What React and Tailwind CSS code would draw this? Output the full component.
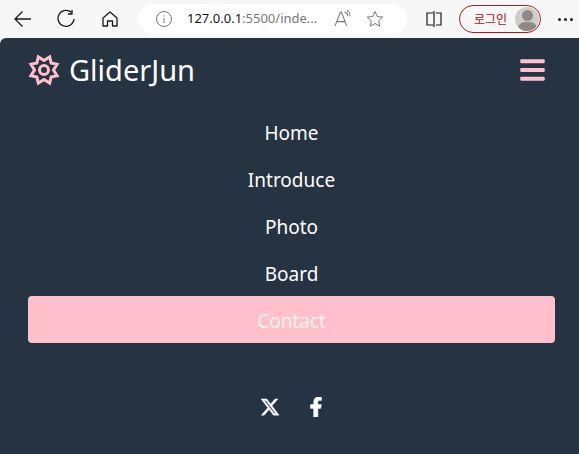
import React from 'react';
import { FaBars, FaFacebookF } from 'react-icons/fa';
import { FaXTwitter } from 'react-icons/fa6';

const menu = ['Home', 'Introduce', 'Photo', 'Board'];

const Toolbar = () => (
  <div className="flex h-[38px] items-center bg-[#f7f7f7] font-['Noto_Sans',sans-serif]">
    <svg className="ml-[13px] h-[20px] w-[20px]" viewBox="0 0 20 20" fill="none" stroke="#1a1a1a" strokeWidth="1.3">
      <path d="M18 10H2M9.5 2.5 2 10l7.5 7.5" />
    </svg>
    <svg className="ml-[23px] h-[20px] w-[20px]" viewBox="0 0 20 20" fill="none" stroke="#1a1a1a" strokeWidth="1.3">
      <path d="M15.5 3.500A8 8 0 1 0 18 10" />
      <path d="M16 1v4h-4" />
    </svg>
    <svg className="ml-[25px] h-[18px] w-[18px]" viewBox="0 0 18 18" fill="none" stroke="#1a1a1a" strokeWidth="1.3">
      <path d="M2 8 9 2l7 6v8h-4.500v-5h-5v5H2z" strokeLinejoin="round" />
    </svg>
    <div className="ml-[19px] flex h-[30px] w-[269px] items-center rounded-full bg-white pl-[18px]">
      <svg className="h-[16px] w-[16px] shrink-0" viewBox="0 0 16 16" fill="none" stroke="#777" strokeWidth="1">
        <circle cx="8" cy="8" r="7.500" />
        <path d="M8 7v5M8 4v1.500" />
      </svg>
      <span className="ml-[15px] whitespace-nowrap text-[13px] text-[#777]">
        <span className="text-[#111]">127.0.0.1</span>:5500/inde...
      </span>
      <svg className="ml-[17px] h-[18px] w-[18px] shrink-0" viewBox="0 0 17 17" fill="none" stroke="#777" strokeWidth="1">
        <path d="M1 15 6 2h1l5 13M3 11h7M10 2a4 4 0 0 1 3 4M12 0a6 6 0 0 1 3 6" />
      </svg>
      <svg className="ml-[14px] h-[18px] w-[18px] shrink-0" viewBox="0 0 18 18" fill="none" stroke="#777" strokeWidth="1">
        <path d="m9 1.500 2.300 5 5.400.6-4 3.700 1.100 5.400L9 13.500l-4.800 2.700 1.100-5.400-4-3.700 5.400-.6z" strokeLinejoin="round" />
      </svg>
    </div>
    <svg className="ml-[19px] h-[16px] w-[16px] shrink-0" viewBox="0 0 16 16" fill="none" stroke="#1a1a1a" strokeWidth="1.200">
      <path d="M7 2H1v12h6M10 2h5v12h-5M8 0v16" />
    </svg>
    <div className="ml-[17px] flex h-[28px] w-[82px] shrink-0 items-center rounded-full border border-[#b01c1c] pl-[14px] font-['Noto_Sans_CJK_KR',sans-serif]">
      <span className="whitespace-nowrap text-[12px] text-[#b01010]">로그인</span>
      <span className="relative ml-[8px] flex h-[24px] w-[24px] items-start justify-center overflow-hidden rounded-full bg-[#cfcdc9]">
        <span className="absolute top-[3px] h-[11px] w-[11px] rounded-full bg-[#8d8a87]" />
        <span className="absolute top-[15px] h-[14px] w-[19px] rounded-full bg-[#8d8a87]" />
      </span>
    </div>
    <div className="ml-[17px] flex gap-[3px]">
      <span className="h-[3px] w-[3px] rounded-full bg-[#222]" />
      <span className="h-[3px] w-[3px] rounded-full bg-[#222]" />
      <span className="h-[3px] w-[3px] rounded-full bg-[#222]" />
    </div>
  </div>
);

export default function App() {
  return (
    <div className="h-[454px] w-[579px] overflow-hidden bg-[#f7f7f7]">
      <Toolbar />
      <div className="h-[416px] rounded-tl-[6px] bg-[#263343] pl-[28px] pr-[24px] font-['Noto_Sans',sans-serif] text-white">
        <div className="flex h-[64px] items-center justify-between pr-[9px]">
          <div className="flex items-center">
            <svg className="h-[32px] w-[32px] text-[#ffc0cb]" viewBox="0 0 32 32" fill="none" stroke="currentColor" strokeWidth="3" strokeLinejoin="miter">
              <path d="M16 6.500 21.700 2.900 23.100 8.900 29.100 10.300 25.500 16 29.100 21.700 23.100 23.100 21.700 29.100 16 25.500 10.300 29.100 8.900 23.100 2.900 21.700 6.500 16 2.900 10.300 8.900 8.900 10.300 2.900Z" />
              <circle cx="16" cy="16" r="4.500" />
            </svg>
            <span className="ml-[9px] -translate-y-[1px] text-[29px] leading-none">GliderJun</span>
          </div>
          <FaBars className="h-[28px] w-[27px] text-[#ffc0cb]" />
        </div>
        <ul className="mt-[6px] flex flex-col">
          {menu.map((item) => (
            <li key={item} className="flex h-[47px] items-center justify-center pt-[3px] text-[19px]">
              {item}
            </li>
          ))}
          <li className="flex h-[47px] items-center justify-center rounded-[4px] bg-[#ffc0cb] pt-[3px] text-[19px] text-[#f7f3f4]">
            Contact
          </li>
        </ul>
        <div className="mt-[54px] flex items-center justify-center gap-[26px] pl-[3px]">
          <FaXTwitter className="h-[20px] w-[20px] stroke-[12px]" />
          <FaFacebookF className="h-[20px] w-[20px] stroke-[20px]" />
        </div>
      </div>
    </div>
  );
}
